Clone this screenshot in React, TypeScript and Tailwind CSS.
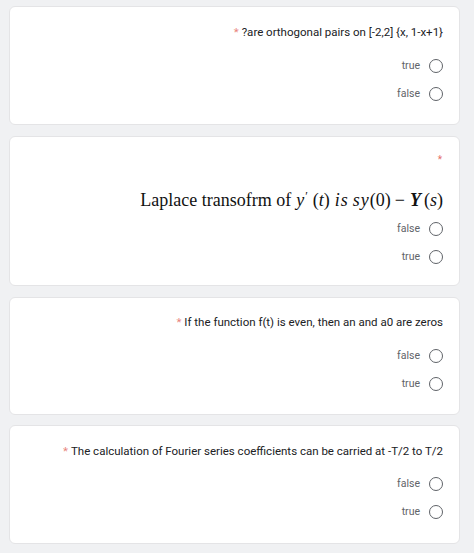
import React from "react";

const sans = { fontFamily: "Roboto, 'Noto Sans', Arial, sans-serif" };

function Radio({ label }: { label: string }) {
  return (
    <div className="flex items-center justify-end h-[28px]">
      <span className="text-[10.5px] text-[#5f6368] mr-[9px]" style={sans}>{label}</span>
      <span className="w-[14px] h-[14px] rounded-full border-[1.5px] border-[#5f6368] bg-white" />
    </div>
  );
}

function Question({ text }: { text: string }) {
  return (
    <div className="flex justify-end text-[11.5px] text-[#202124] leading-[14px]" style={sans}>
      <span>
        <span className="text-[#d93025] opacity-60 mr-[3px]">*</span>
        {text}
      </span>
    </div>
  );
}

export default function App() {
  return (
    <div className="w-[474px] h-[553px] bg-[#f0f1f3] pl-[9px] pr-[14px] pt-[6px] flex flex-col gap-[10px] overflow-hidden">
      <div className="h-[119px] bg-white rounded-[6px] border border-[#e4e4e6] pr-[16px] pt-[18px]">
        <Question text="?are orthogonal pairs on [-2,2] {x, 1-x+1}" />
        <div className="mt-[13px]">
          <Radio label="true" />
          <Radio label="false" />
        </div>
      </div>

      <div className="h-[150px] bg-white rounded-[6px] border border-[#e4e4e6] pr-[16px] pt-[18px] mt-[1px]">
        <div className="flex justify-end h-[10px] pr-[1px]">
          <span className="text-[#d93025] text-[10px] leading-[10px] opacity-70" style={sans}>*</span>
        </div>
        <div
          className="flex justify-end items-end mt-[24px] text-[18px] leading-[22px] text-[#111]"
          style={{ fontFamily: "'Liberation Serif', 'Times New Roman', serif" }}
        >
          <span className="mr-[5px]">Laplace transofrm of</span>
          <span className="italic">y</span>
          <span className="relative -top-[9px] text-[12px] leading-[12px] ml-[1px] mr-[5px]">&#8242;</span>
          <span className="mr-[5px]">(<span className="italic">t</span>)</span>
          <span className="italic mr-[4px] tracking-[1px]">is</span>
          <span className="italic tracking-[1px]">sy</span>
          <span className="mr-[4px]">(0)</span>
          <span className="mr-[5px]">&minus;</span>
          <span className="italic font-bold mr-[3px]">Y</span>
          <span>(<span className="italic">s</span>)</span>
        </div>
        <div className="mt-[4px]">
          <Radio label="false" />
          <Radio label="true" />
        </div>
      </div>

      <div className="h-[118px] bg-white rounded-[6px] border border-[#e4e4e6] pr-[16px] pt-[17px] mt-[1px]">
        <Question text="If the function f(t) is even, then an and a0 are zeros" />
        <div className="mt-[13px]">
          <Radio label="false" />
          <Radio label="true" />
        </div>
      </div>

      <div className="h-[119px] bg-white rounded-[6px] border border-[#e4e4e6] pr-[16px] pt-[18px]">
        <Question text="The calculation of Fourier series coefficients can be carried at -T/2 to T/2" />
        <div className="mt-[12px]">
          <Radio label="false" />
          <Radio label="true" />
        </div>
      </div>
    </div>
  );
}
